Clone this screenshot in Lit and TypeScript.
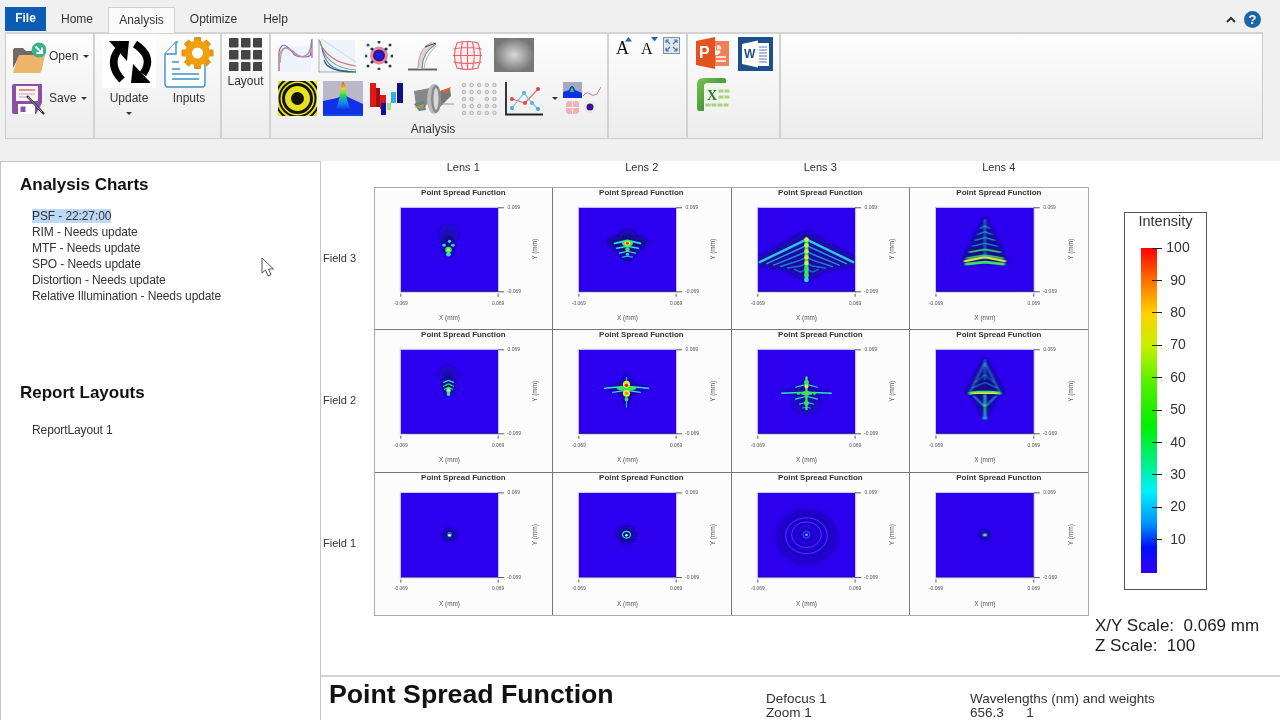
import { LitElement, html, css, svg } from "lit";
import { customElement } from "lit/decorators.js";

const E = (x: number, y: number, rx: number, ry: number, f: string, o = 1) =>
  svg`<ellipse cx=${x} cy=${y} rx=${rx} ry=${ry} fill=${f} opacity=${o}></ellipse>`;
const L = (pts: string, s: string, w = 1, o = 1) =>
  svg`<polyline points=${pts} fill="none" stroke=${s} stroke-width=${w} opacity=${o} stroke-linecap="round" stroke-linejoin="round"></polyline>`;
const G = (pts: string, f: string, o = 1) => svg`<polygon points=${pts} fill=${f} opacity=${o}></polygon>`;
const O = (x: number, y: number, rx: number, ry: number, s: string, w = 1, o = 1) =>
  svg`<ellipse cx=${x} cy=${y} rx=${rx} ry=${ry} fill="none" stroke=${s} stroke-width=${w} opacity=${o}></ellipse>`;

const DK = "#0a0a86", CY = "#35d8ea", GR = "#3ce25a", YE = "#dcec30", RD = "#e02a10", WH = "#e8ffff";

type Psf = { h: unknown[]; c: unknown[] };
const range = (n: number) => Array.from({ length: n }, (_, i) => i);

const PSF: Psf[] = [
  // row 1 (Field 3)
  {
    h: [E(48, 27, 9, 10, "#1c10b0", 0.8), E(48, 37, 6, 9, DK), E(48, 44, 5, 5, DK)],
    c: [E(49, 34, 1.6, 1.6, CY), E(43.5, 38, 1.8, 1.5, CY), E(52.5, 38, 1.8, 1.5, CY), E(48, 42.5, 3.4, 3, GR), E(48, 42.5, 1.8, 1.6, YE), E(48, 47, 2.4, 2.2, CY)],
  },
  {
    h: [E(49, 35, 20, 7, DK), G("32,36 66,36 49,56", DK, 0.9), E(49, 29, 8, 7, DK, 0.7)],
    c: [L("36,36 49,33 62,36", CY, 2), L("38,41 49,39 60,41", CY, 1.6), L("41,46 49,44 57,46", CY, 1.3), L("44,50 49,49 54,50", "#2aa8e0", 1.2), E(49, 36, 5.5, 3.4, GR), E(49, 36, 3, 2.4, YE), E(49, 36, 1.5, 1.3, RD), E(49, 42, 2.2, 2.2, GR), E(49, 47, 1.6, 1.6, CY)],
  },
  {
    h: [G("49,23 0,50 0,59 30,64 49,75 68,64 98,59 98,50", DK, 0.7)],
    c: [
      ...range(6).map((i) =>
        L(`${2 + i * 7},${55 + i * 1.5} ${49 - 6},${35 + i * 6} 49,${32 + i * 6} ${49 + 6},${35 + i * 6} ${96 - i * 7},${55 + i * 1.5}`, i === 0 ? CY : "#28b4e0", i === 0 ? 2.4 : 1.5, 0.9 - i * 0.08)
      ),
      L("49,32 49,70", GR, 4),
      ...range(7).map((i) => E(49, 32 + i * 6, 2.2, 2.2, i < 5 ? YE : GR)),
      E(49, 73, 2.4, 2.4, CY),
    ],
  },
  {
    h: [G("49,8 25,56 73,56", DK, 0.9)],
    c: [
      ...range(6).map((i) => {
        const y = 18 + i * 6, w = (y - 9) * 0.46;
        return L(`${49 - w},${y + 3} 49,${y} ${49 + w},${y + 3}`, i > 3 ? GR : "#28b4e0", i > 3 ? 1.8 : 1.1, 0.85);
      }),
      L("29,54 49,50 69,54", YE, 2.2),
      L("30,57 49,55 68,57", GR, 2.6),
      L("49,12 49,52", "#2cc0e8", 1.1),
    ],
  },
  // row 2 (Field 2)
  {
    h: [E(48, 25, 9, 8, "#1c10b0", 0.8), E(48, 36, 6, 10, DK)],
    c: [L("43,33 48,31 53,33", CY, 1.3), L("43,37 48,34.5 53,37", GR, 1.2), L("44,40 48,38 52,40", CY, 1.1), E(48, 41, 2.4, 2.9, GR), E(48, 41, 1.4, 1.8, YE), E(48, 45, 1.7, 1.9, CY)],
  },
  {
    h: [G("48,23 53,35 72,39 53,43 48,60 43,43 24,39 43,35", DK, 0.95), E(48, 39, 11, 7, DK)],
    c: [L("26,39 48,37 70,39", CY, 1.5), L("34,43 48,41 62,43", CY, 1.3), L("48,28 48,58", "#2aa8e0", 1.3), E(48, 39, 10, 2.6, GR), E(48, 35, 3.6, 3.6, YE), E(48, 36, 1.8, 1.8, RD), E(48, 44, 3.6, 3.6, YE), E(48, 44, 1.6, 1.6, "#e88020"), E(48, 50, 1.8, 2.2, GR)],
  },
  {
    h: [G("49,28 55,38 76,44 56,47 49,66 42,47 22,44 42,38", DK, 0.85), E(49, 53, 13, 12, "#1c10b0", 0.8)],
    c: [L("24,44 49,43 74,44", CY, 1.4), L("38,38 49,35 60,38", CY, 1.1), L("38,50 49,47 60,50", CY, 1.2), L("42,55 49,53 56,55", CY, 1), L("45,59 49,58 53,59", "#2aa8e0", 1), L("49,28 49,60", GR, 2.4), E(49, 33, 2.4, 2.6, GR), E(49, 37, 2, 2.2, YE), E(49, 44, 3.8, 2.4, GR), ...[41, 45, 53, 57].map((x) => E(x, 44, 1.6, 1.6, GR)), E(49, 54, 2.4, 2.4, GR)],
  },
  {
    h: [G("49,7 29,43 38,49 46,68 52,68 60,49 69,43", DK, 0.9)],
    c: [L("49,10 49,30", "#2aa8e0", 1.1), L("49,13 34,43", CY, 1), L("49,13 64,43", CY, 1), L("40,33 49,25 58,33", "#2aa8e0", 0.8), L("36,39 49,33 62,39", "#2aa8e0", 0.8), L("34,44 42,43 56,43 64,44", GR, 3), L("37,44 61,44", YE, 1.4), L("38,47 49,58 60,47", CY, 1.1), L("49,46 49,68", CY, 2), L("49,54 49,62", GR, 1.4), E(49, 69, 2.6, 1.7, "#2aa8e0")],
  },
  // row 3 (Field 1)
  { h: [E(49, 42, 6.5, 6, DK)], c: [E(49, 42, 2.6, 2.6, "#2060d0"), E(49, 42.5, 1.3, 1.3, WH)] },
  { h: [E(48, 42, 9, 8.5, DK)], c: [O(48, 42, 4, 3.4, CY, 1.3), E(48, 42.5, 1.2, 1.2, WH)] },
  {
    h: [E(49, 44, 30, 27, "#2602e0"), O(49, 44, 29, 26, DK, 2.2, 0.7)],
    c: [O(49, 43, 24, 21, "#0e0a92", 1.4, 0.8), O(49, 43, 18, 16, "#0e0a92", 1.2, 0.8), O(49, 42, 12, 11, "#0e0a92", 1.1, 0.8), O(49, 42, 7, 6.5, "#0e0a92", 1, 0.8), O(49, 42, 3.6, 3.4, "#3060d8", 1), O(49, 43, 21, 18, "#5040ff", 1, 0.8), O(49, 42, 15, 13, "#5040ff", 1, 0.8), E(49, 42, 1.3, 1.3, CY)],
  },
  { h: [E(49, 42, 5, 4.6, DK)], c: [E(49, 42, 1.9, 1.9, "#2a90e0"), E(49, 42.5, 1.2, 1.2, "#a0f8ff")] },
];

const chart = (i: number) => {
  const p = PSF[i];
  return html`<svg class="chart" viewBox="0 0 178.5 143" preserveAspectRatio="none">
    <defs>
      <filter id=${"h" + i} x="-30%" y="-30%" width="160%" height="160%"><feGaussianBlur stdDeviation="2"></feGaussianBlur></filter>
      <filter id=${"c" + i} x="-30%" y="-30%" width="160%" height="160%"><feGaussianBlur stdDeviation="0.8"></feGaussianBlur></filter>
      <clipPath id=${"k" + i}><rect width="98" height="85"></rect></clipPath>
    </defs>
    <text class="tt" x="89" y="6.600" text-anchor="middle">Point Spread Function</text>
    <rect x="25" y="19" width="100" height="87" fill="#cfcaf8"></rect>
    <g transform="translate(26 20)" clip-path=${"url(#k" + i + ")"}>
      <rect width="98" height="85" fill="#2c00ee"></rect>
      <rect y="84" width="98" height="1" fill="#10108a"></rect>
      <g filter=${"url(#h" + i + ")"}>${p.h}</g>
      <g filter=${"url(#c" + i + ")"}>${p.c}</g>
    </g>
    <path d="M124 20h6M124 105h6M26 107v3M124 107v3" stroke="#333" stroke-width=".8" fill="none"></path>
    <text class="tk" x="133.500" y="21.500">0.069</text>
    <text class="tk" x="133" y="106.500">-0.069</text>
    <text class="tk" x="26" y="118" text-anchor="middle">-0.069</text>
    <text class="tk" x="124" y="118" text-anchor="middle">0.069</text>
    <text class="ax" x="75" y="133.500" text-anchor="middle">X (mm)</text>
    <text class="ax" transform="translate(163 62) rotate(-90)" text-anchor="middle">Y (mm)</text>
  </svg>`;
};

const folderIcon = html`<svg width="34" height="32" viewBox="0 0 34 32">
  <path d="M1 26V8q0-2 2-2h8l3 3h10v4H8z" fill="#6f6a66"></path>
  <path d="M1 31l5-16q.5-2 2.500-2H33l-3.500 16q-.5 2-2.500 2z" fill="#eeb468"></path>
  <circle cx="27" cy="8" r="7.500" fill="#3ab08c"></circle>
  <path d="M23.500 4.500l6 6M30 5.500v5.500h-5.500" stroke="#fff" stroke-width="1.800" fill="none"></path>
</svg>`;

const saveIcon = html`<svg width="34" height="33" viewBox="0 0 34 33">
  <path d="M0 3q0-2 2-2h28v19l-6 11H2q-2 0-2-2z" fill="#8a4fa6"></path>
  <rect x="4" y="3" width="22" height="15" fill="#fbf4f2"></rect>
  <path d="M7 7h16" stroke="#e05a50" stroke-width="1.300"></path>
  <path d="M7 11h16M7 14h11" stroke="#c8a0c8" stroke-width="1.200"></path>
  <rect x="6" y="21" width="17" height="10" fill="#fff"></rect>
  <rect x="8.500" y="23.500" width="5" height="5.500" fill="#8a4fa6"></rect>
  <path d="M15 13l17 18" stroke="#333" stroke-width="2.400"></path>
  <path d="M16 14l14 15" stroke="#c0c0c0" stroke-width=".8"></path>
</svg>`;

const updateIcon = html`<svg class="white" width="54" height="51" viewBox="0 0 54 51">
  <path d="M20 43Q5 27 17 12" fill="none" stroke="#000" stroke-width="7.500"></path>
  <path d="M7 4H27L25 24z" fill="#000"></path>
  <path d="M33 7Q53 20 41 37" fill="none" stroke="#000" stroke-width="7.500"></path>
  <path d="M29 46H48V45L31 27z" fill="#000"></path>
</svg>`;

const teeth = range(8).map(
  (i) => svg`<rect x="30" y="0" width="7" height="7" rx="1" fill="#e8950c" transform=${`rotate(${i * 45} 33.500 16)`}></rect>`
);
const inputsIcon = html`<svg width="50" height="51" viewBox="0 0 50 51">
  <path d="M14 5H12L1 17V47q0 3 3 3H38q3 0 3-3V26" fill="#fff" stroke="#3c90c8" stroke-width="1.400"></path>
  <path d="M12 5V17H1" fill="#fff" stroke="#3c90c8" stroke-width="1.400"></path>
  <path d="M8 25h7M8 32h8M8 37h27M8 42h27" stroke="#3c90c8" stroke-width="1.600"></path>
  ${teeth}
  <circle cx="33.500" cy="16" r="12.500" fill="#eea010"></circle>
  <circle cx="33.500" cy="16" r="5.500" fill="#fff"></circle>
</svg>`;

const layoutIcon = html`<svg width="33" height="33" viewBox="0 0 33 33">
  ${range(9).map((i) => svg`<rect x=${(i % 3) * 12} y=${Math.floor(i / 3) * 12} width="9.500" height="9.500" rx="1" fill="#444"></rect>`)}
</svg>`;

const ic1 = html`<svg width="35" height="34" viewBox="0 0 35 34">
  <rect x="2" y="8" width="31" height="26" fill="#eef3fb"></rect>
  <path d="M1 33V14Q3 5 8 8T15 15 26 19 32 14L34 1V20" fill="none" stroke="#9a68b8" stroke-width="1.200"></path>
  <path d="M2 25Q3 8 9 10T18 16 27 18 33 5" fill="none" stroke="#78b8a0" stroke-width="1.200"></path>
  <path d="M1 33V18Q4 7 10 11T22 18 33 10" fill="none" stroke="#d88090" stroke-width="1"></path>
</svg>`;
const ic2 = html`<svg width="39" height="35" viewBox="0 0 39 35">
  <rect x="3" y="2" width="34" height="32" fill="#eef3fb"></rect>
  <path d="M1 1V34H38" fill="none" stroke="#777" stroke-width=".6"></path>
  <path d="M3 1L38 24" stroke="#ccd6d6" stroke-width="1"></path>
  <path d="M1 2Q8 24 38 28" fill="none" stroke="#d87878" stroke-width="1.200"></path>
  <path d="M2 3Q7 30 38 32" fill="none" stroke="#68a888" stroke-width="1.200"></path>
  <path d="M4 10Q8 33 30 33" fill="none" stroke="#6868c8" stroke-width="1.200"></path>
  <path d="M6 22Q9 34 38 34" fill="none" stroke="#286860" stroke-width="1.200"></path>
</svg>`;
const ic3 = html`<svg width="28" height="29" viewBox="0 0 28 29">
  <circle cx="14" cy="14.500" r="9" fill="#e88890"></circle>
  <circle cx="14" cy="14.500" r="6" fill="#3a10a0"></circle>
  <circle cx="14" cy="14.500" r="3.500" fill="#2020e0"></circle>
  ${[[3, 4], [14, 1], [25, 4], [1, 15], [27, 15], [3, 25], [14, 28], [25, 25]].map(
    ([x, y], i) => svg`<circle cx=${x} cy=${y} r="1.500" fill=${i % 3 === 0 ? "#1050b0" : "#104060"}></circle>`
  )}
  ${[[7, 8], [21, 8], [7, 21], [21, 21]].map(([x, y]) => svg`<circle cx=${x} cy=${y} r="1.600" fill="#103060"></circle>`)}
</svg>`;
const ic4 = html`<svg width="30" height="31" viewBox="0 0 30 31">
  <path d="M1 29.500H30" stroke="#666" stroke-width="2"></path>
  <path d="M13 29Q13 10 28 4" fill="none" stroke="#d8d8d8" stroke-width="5"></path>
  <path d="M11 29Q11 8 25 2" fill="none" stroke="#e89090" stroke-width="1"></path>
  <path d="M15 29Q15 12 29 4" fill="none" stroke="#509070" stroke-width="1"></path>
  <path d="M17 29Q18 16 29 6" fill="none" stroke="#b0b0b0" stroke-width="1"></path>
  <path d="M18 7L29 3" stroke="#333" stroke-width="1"></path>
</svg>`;
const ic5 = html`<svg width="31" height="29" viewBox="0 0 31 29" fill="none" stroke="#e8606c" stroke-width="1.100">
  <path d="M5 2Q15.500-1 26 2Q31 14.500 26 27Q15.500 30 5 27Q0 14.500 5 2z" fill="#fdeef0"></path>
  <path d="M10.500 1Q7 14.500 10.500 28M15.500 0V29M20.500 1Q24 14.500 20.500 28M1.500 8Q15.500 5 29.500 8M1 14.500H30M1.500 21Q15.500 24 29.500 21"></path>
</svg>`;
const ic6 = html`<svg width="40" height="34" viewBox="0 0 40 34">
  <defs><radialGradient id="g6"><stop offset="0" stop-color="#d8d8d8"></stop><stop offset="1" stop-color="#777"></stop></radialGradient></defs>
  <rect width="40" height="34" fill="url(#g6)"></rect>
</svg>`;
const rings = html`<svg width="39" height="35" viewBox="0 0 39 35">
  <rect width="39" height="35" fill="#e6e220"></rect>
  <g fill="none" stroke="#14140a">
    <circle cx="19.500" cy="17.500" r="22" stroke-width="2"></circle>
    <circle cx="19.500" cy="17.500" r="18" stroke-width="2"></circle>
    <circle cx="19.500" cy="17.500" r="14" stroke-width="3"></circle>
  </g>
  <circle cx="19.500" cy="17.500" r="6.500" fill="#14140a"></circle>
</svg>`;
const surf = html`<svg width="40" height="35" viewBox="0 0 40 35">
  <defs><linearGradient id="gs" x1="0" y1="0" x2="0" y2="1"><stop offset="0" stop-color="#e84020"></stop><stop offset=".25" stop-color="#e8d820"></stop><stop offset=".5" stop-color="#20d860"></stop><stop offset=".8" stop-color="#1080f0"></stop><stop offset="1" stop-color="#0840e0"></stop></linearGradient></defs>
  <rect width="40" height="35" fill="#b8b8c8"></rect>
  <path d="M0 35V20L14 17L18 15Q19 8 20 1Q22 8 23 15L27 17L40 23V35z" fill="#1030e8"></path>
  <path d="M13 28Q16 22 17 12Q18.500 1 20 1Q22 1 23 12Q24 22 28 28z" fill="url(#gs)"></path>
  <rect y="33" width="40" height="2" fill="#0a50e8"></rect>
</svg>`;
const bars = html`<svg width="35" height="34" viewBox="0 0 35 34">
  <rect x="1" y="2" width="6" height="24" fill="#e01818"></rect>
  <rect x="7" y="7" width="4" height="19" fill="#a01010"></rect>
  <rect x="11" y="14" width="6" height="14" fill="#d81818"></rect>
  <rect x="12" y="22" width="5" height="12" fill="#1010a0"></rect>
  <rect x="18" y="22" width="4" height="7" fill="#a0e080"></rect>
  <rect x="22" y="11" width="5" height="11" fill="#30b0e8"></rect>
  <rect x="28" y="2" width="6" height="20" fill="#101080"></rect>
</svg>`;
const lens = html`<svg width="45" height="33" viewBox="0 0 45 33">
  <path d="M4 9L20 6L22 16L14 26L6 24z" fill="#888"></path>
  <path d="M4 22L14 19L16 28L9 29z" fill="#4f8f80"></path>
  <path d="M4 25L14 22L13 27z" fill="#d08850"></path>
  <path d="M27 10L40 6L41 14L30 25z" fill="#777"></path>
  <path d="M30 9L41 5L38 11z" fill="#d8663c"></path>
  <ellipse cx="24" cy="17" rx="7" ry="15" fill="#bbb"></ellipse>
  <ellipse cx="26" cy="17" rx="5" ry="14" fill="#8a8a8a"></ellipse>
  <ellipse cx="26" cy="17" rx="2.500" ry="11" fill="#d8d8d8"></ellipse>
  <path d="M32 22H44" stroke="#999" stroke-width="1"></path>
</svg>`;
const spots = html`<svg width="36" height="33" viewBox="0 0 36 33">
  ${range(25).map((i) => {
    const x = (i % 5) * 7.6 + 3, y = Math.floor(i / 5) * 7 + 3;
    return i === 12 ? svg`` : svg`<circle cx=${x} cy=${y} r="1.800" fill="#ddd" stroke="#a0a0a0" stroke-width=".7"></circle>`;
  })}
</svg>`;
const linec = html`<svg width="38" height="35" viewBox="0 0 38 35">
  <path d="M1 1V33.500H38" fill="none" stroke="#222" stroke-width="1.800"></path>
  <path d="M7 18L20 22L33 8" fill="none" stroke="#e07070" stroke-width="1.200"></path>
  ${[[7, 27], [19, 12], [27, 22]].map(([x, y]) => svg`<circle cx=${x} cy=${y} r="2" fill="#40a8d8"></circle>`)}
  ${[[7, 18], [20, 22], [33, 8]].map(([x, y]) => svg`<circle cx=${x} cy=${y} r="2" fill="#d84848"></circle>`)}
  <path d="M7 27L19 12L27 22L33 28" fill="none" stroke="#70c0e0" stroke-width="1.200"></path>
  <circle cx="33" cy="28" r="2" fill="#40a8d8"></circle>
</svg>`;
const combo = html`<svg width="38" height="33" viewBox="0 0 38 33">
  <rect width="19" height="16" fill="#a8a8c0"></rect>
  <path d="M0 16V10L6 8Q9 0 12 8L19 11V16z" fill="#1030e8"></path>
  <path d="M7 10Q9 1 11 10z" fill="#30d050"></path>
  <path d="M20 14Q24 9 27 12T34 12L38 5" fill="none" stroke="#b080a8" stroke-width="1"></path>
  <rect x="3" y="19" width="13" height="13" rx="3" fill="#f4b0b8"></rect>
  <path d="M3 25.500H16M9.500 19V32" stroke="#fff" stroke-width="1"></path>
  <circle cx="27" cy="25" r="3.500" fill="#3a108c"></circle>
  <circle cx="27" cy="25" r="5.500" fill="none" stroke="#e8c8d8" stroke-width="1" stroke-dasharray="1 2"></circle>
</svg>`;

const fontUp = html`<svg width="20" height="23" viewBox="0 0 20 23">
  <text x="0" y="16.500" class="aa">A</text><path d="M9 4.500L12.500 0L16 4.500z" fill="#1f6aa8"></path>
</svg>`;
const fontDown = html`<svg width="20" height="23" viewBox="0 0 20 23">
  <text x="1" y="16.500" class="ab">A</text><path d="M11 0H18L14.500 4.500z" fill="#1f6aa8"></path>
</svg>`;
const fitIcon = html`<svg width="17" height="17" viewBox="0 0 17 17">
  <rect x=".5" y=".5" width="16" height="16" fill="#dfe6ee" stroke="#7d93b0"></rect>
  <path d="M3 3L7 7M3 3v3M3 3h3M14 3L10 7M14 3v3M14 3h-3M3 14L7 10M3 14v-3M3 14h3M14 14L10 10M14 14v-3M14 14h-3" stroke="#4a78a8" stroke-width="1.200" fill="none"></path>
</svg>`;
const pptIcon = html`<svg width="33" height="32" viewBox="0 0 33 32">
  <rect x="15" y="4" width="18" height="25" fill="#f08058"></rect>
  <path d="M20 9a4.500 4.500 0 1 0 4.500 4.500H20z" fill="#fff"></path>
  <path d="M21 8a4.500 4.500 0 0 1 4.500 4.500H21z" fill="#fde0d4"></path>
  <path d="M20 20h10M20 24h10" stroke="#fff" stroke-width="1.400"></path>
  <path d="M0 4L19 0V32L0 28z" fill="#e2531e"></path>
  <text x="3" y="21" class="pp">P</text>
</svg>`;
const wordIcon = html`<svg width="35" height="34" viewBox="0 0 35 34">
  <rect width="35" height="34" fill="#1d4f8f"></rect>
  <rect x="18" y="6" width="13" height="23" fill="#fff"></rect>
  <path d="M21 10h8M21 13h8M21 16h8M21 19h8M21 22h8M21 25h8" stroke="#5a80b0" stroke-width="1.100"></path>
  <path d="M4 7L20 3.500V30.500L4 27z" fill="#fff"></path>
  <text x="6" y="21" class="ww">W</text>
</svg>`;
const xlsIcon = html`<svg width="34" height="35" viewBox="0 0 34 35">
  <defs><linearGradient id="gx" x1="0" y1="0" x2="1" y2="1"><stop offset="0" stop-color="#7cc450"></stop><stop offset="1" stop-color="#207830"></stop></linearGradient></defs>
  <path d="M1 31V7Q1 1 8 1H28Q30 1 30 3V6H12Q8 6 8 10V34H3Q1 34 1 31z" fill="url(#gx)"></path>
  <rect x="8" y="7" width="26" height="27" rx="2" fill="#f0f6e8"></rect>
  ${[[25, 14], [31, 14], [25, 20], [31, 20], [12, 28], [18, 28], [24, 28], [30, 28]].map(
    ([x, y]) => svg`<rect x=${x - 2.5} y=${y - 1.5} width="5" height="3" fill="#a8d088"></rect>`
  )}
  <text x="11" y="22.500" class="xx">X</text>
</svg>`;

const row1 = [ic1, ic2, ic3, ic4, ic5, ic6];
const row2 = [rings, surf, bars, lens, spots, linec];

@customElement("app-root")
export class AppRoot extends LitElement {
  static styles = css`
    :host { display: block; width: 1280px; height: 720px; overflow: hidden; position: relative; background: #fff; color: #333; font-family: "Liberation Sans", Arial, sans-serif; filter: blur(0.5px); }
    * { box-sizing: border-box; }
    .top { height: 161px; background: #f0f0f0; }
    .tabs { height: 32px; padding: 7px 0 0 5px; display: flex; align-items: flex-start; font-size: 12px; }
    .tab { height: 25px; line-height: 25px; text-align: center; color: #333; }
    .file { width: 41px; background: #0b5cb5; color: #fff; font-weight: bold; height: 24px; line-height: 22px; }
    .home { width: 62px; }
    .analysis { width: 67px; background: #fafafa; border: 1px solid #d0d0d0; border-bottom: none; height: 26px; line-height: 24px; position: relative; z-index: 1; }
    .optimize { width: 77px; }
    .help { width: 47px; }
    .spacer { flex: 1; }
    .tools { display: flex; align-items: center; height: 24px; gap: 8px; margin-right: 19px; }
    .panel { margin: 0 17px 0 5px; height: 107px; border: 1px solid #cccccc; border-top: 2px solid #d4d4d4; background: linear-gradient(#fdfdfd, #ececec); display: flex; font-size: 12px; color: #333; }
    .grp { border-right: 2px solid #d2d2d2; flex: none; height: 100%; }
    .g1 { width: 89px; padding: 7px 0 0 6px; display: flex; flex-direction: column; gap: 9px; }
    .btnrow { display: flex; align-items: center; gap: 3px; height: 33px; }
    .btnrow span { padding-bottom: 3px; }
    .btnrow .caret { margin: 0 0 2px 2px; }
    .caret { display: inline-block; width: 0; height: 0; border: 3px solid transparent; border-top: 3px solid #333; border-bottom: none; }
    .g2 { width: 127px; padding: 3px 0 0 7px; display: flex; gap: 8px; }
    .col { display: flex; flex-direction: column; align-items: center; }
    .col span { margin-top: 3px; line-height: 15px; }
    .col .caret { margin: 6px 0 0; }
    .white { background: #fff; }
    .g3 { width: 49px; padding-top: 4px; }
    .g3 span { margin-top: 3px; }
    .g4 { width: 338px; padding: 3px 0 0 7px; }
    .r1 { display: grid; grid-template-columns: 40px 47px 42px 45px 42px 40px; height: 36px; align-items: center; }
    .r2 { display: grid; grid-template-columns: 45px 46px 41px 51px 44px 45px 13px 40px; height: 36px; margin-top: 7px; align-items: center; }
    .r2 .caret { margin: 0 0 0 2px; }
    .glabel { width: 310px; text-align: center; margin-top: 6px; line-height: 14px; }
    .g5 { width: 79px; padding: 3px 0 0 7px; display: flex; gap: 3.500px; align-items: flex-start; }
    .g6 { width: 93px; padding: 3px 0 0 8px; display: grid; grid-template-columns: 42px 35px; grid-template-rows: 40px 35px; }
    .g7 { flex: 1; }
    svg { display: block; flex: none; }
    .aa { font: 18px "Liberation Serif", serif; fill: #111; }
    .ab { font: 16px "Liberation Serif", serif; fill: #111; }
    .pp { font: bold 16px "Liberation Sans", sans-serif; fill: #fff; }
    .ww { font: bold 12px "Liberation Sans", sans-serif; fill: #1d4f8f; }
    .xx { font: bold 14px "Liberation Serif", serif; fill: #2d7a34; }
    .main { display: flex; height: 559px; }
    .left { width: 321px; flex: none; border: 1px solid #c4c4c4; border-bottom: none; padding: 13px 0 0 19px; }
    h2 { margin: 0; font-size: 17px; line-height: 20px; color: #111; font-weight: bold; }
    ul { list-style: none; margin: 13px 0 0 12px; padding: 0; font-size: 12px; letter-spacing: -0.100px; line-height: 16px; color: #333; }
    .sel { background: #bdd9f7; }
    .reports { margin-top: 79px; }
    .reports ul { margin-top: 19px; }
    .right { flex: 1; display: flex; flex-direction: column; }
    .upper { height: 514px; display: grid; grid-template-columns: 53px 715px 1fr; grid-template-rows: 26px 429px; font-size: 11px; color: #333; }
    .heads { grid-column: 2; display: grid; grid-template-columns: repeat(4, 1fr); line-height: 13px; text-align: center; padding-right: 1px; }
    .fields { grid-column: 1; grid-row: 2; display: grid; grid-template-rows: repeat(3, 1fr); align-items: center; padding: 0 0 2px 2px; }
    .grid { grid-column: 2; grid-row: 2; display: grid; grid-template-columns: repeat(4, 1fr); grid-template-rows: repeat(3, 1fr); border: 1px solid #aaa; background: #fcfcfc; }
    .cell { border-right: 1px solid #777; border-bottom: 1px solid #777; min-width: 0; min-height: 0; }
    .cell:nth-child(4n) { border-right: none; }
    .cell:nth-child(n + 9) { border-bottom: none; }
    .chart { width: 100%; height: 100%; }
    .tt { font: bold 8px "Liberation Sans", sans-serif; fill: #333; }
    .tk { font: 5px "Liberation Sans", sans-serif; fill: #555; }
    .ax { font: 6.500px "Liberation Sans", sans-serif; fill: #555; }
    .side { grid-column: 3; grid-row: 1 / span 2; padding: 51px 0 0 6px; }
    .legend { width: 83px; height: 378px; margin-left: 29px; border: 1px solid #555; background: #fff; }
    .ltitle { font-size: 14.500px; line-height: 17px; text-align: center; }
    .lbody { display: flex; margin: 18px 0 0 16px; height: 325px; }
    .bar { width: 16px; height: 325px; flex: none; background: linear-gradient(#ff0000 0%, #ff7000 10%, #ffd000 20%, #c8f000 30%, #50f000 42%, #00f000 55%, #00f0a0 68%, #00f0ff 75%, #0090ff 85%, #0010ff 92%, #3200ff 100%); }
    .ticks { margin: -16px 0 0 -5px; }
    .tick { height: 32.400px; display: flex; align-items: center; }
    .mark { width: 10px; height: 1px; background: #222; }
    .num { width: 24px; margin: -2px 0 0 4px; text-align: center; font-size: 14px; color: #333; }
    .scale { margin-top: 26px; font-size: 17px; line-height: 20px; color: #222; white-space: nowrap; }
    .bottom { flex: 1; border-top: 2px solid #d4d4d4; display: grid; grid-template-columns: 437px 204px 1fr; padding-left: 8px; font-size: 13.500px; line-height: 14px; color: #333; white-space: pre; }
    .ptitle { font-size: 26.700px; font-weight: bold; line-height: 30px; color: #111; margin-top: 2px; }
    .info { padding-top: 15px; }
    .cursor { position: absolute; left: 261px; top: 257px; }
  `;

  render() {
    return html`
      <div class="top">
        <div class="tabs">
          <div class="tab file">File</div>
          <div class="tab home">Home</div>
          <div class="tab analysis">Analysis</div>
          <div class="tab optimize">Optimize</div>
          <div class="tab help">Help</div>
          <div class="spacer"></div>
          <div class="tools">
            <svg width="10" height="7" viewBox="0 0 10 7"><path d="M1 6L5 2L9 6" fill="none" stroke="#333" stroke-width="2"></path></svg>
            <svg width="17" height="17" viewBox="0 0 17 17">
              <circle cx="8.500" cy="8.500" r="8.500" fill="#1b66a8"></circle>
              <text x="8.500" y="13" text-anchor="middle" font-family="Liberation Sans" font-weight="bold" font-size="13" fill="#fff">?</text>
            </svg>
          </div>
        </div>
        <div class="panel">
          <div class="grp g1">
            <div class="btnrow">${folderIcon}<span>Open</span><i class="caret"></i></div>
            <div class="btnrow">${saveIcon}<span>Save</span><i class="caret"></i></div>
          </div>
          <div class="grp g2">
            <div class="col">${updateIcon}<span>Update</span><i class="caret"></i></div>
            <div class="col">${inputsIcon}<span>Inputs</span></div>
          </div>
          <div class="grp g3 col">${layoutIcon}<span>Layout</span></div>
          <div class="grp g4">
            <div class="r1">${row1}</div>
            <div class="r2">${row2}<i class="caret"></i>${combo}</div>
            <div class="glabel">Analysis</div>
          </div>
          <div class="grp g5">${fontUp}${fontDown}${fitIcon}</div>
          <div class="grp g6">${pptIcon}${wordIcon}${xlsIcon}</div>
          <div class="g7"></div>
        </div>
      </div>
      <div class="main">
        <div class="left">
          <h2>Analysis Charts</h2>
          <ul>
            <li><span class="sel">PSF - 22:27:00</span></li>
            <li>RIM - Needs update</li>
            <li>MTF - Needs update</li>
            <li>SPO - Needs update</li>
            <li>Distortion - Needs update</li>
            <li>Relative Illumination - Needs update</li>
          </ul>
          <div class="reports">
            <h2>Report Layouts</h2>
            <ul><li>ReportLayout 1</li></ul>
          </div>
        </div>
        <div class="right">
          <div class="upper">
            <div class="heads">
              ${[1, 2, 3, 4].map((n) => html`<div>Lens ${n}</div>`)}
            </div>
            <div class="fields">
              ${[3, 2, 1].map((n) => html`<div>Field ${n}</div>`)}
            </div>
            <div class="grid">
              ${range(12).map((i) => html`<div class="cell">${chart(i)}</div>`)}
            </div>
            <div class="side">
              <div class="legend">
                <div class="ltitle">Intensity</div>
                <div class="lbody">
                  <div class="bar"></div>
                  <div class="ticks">
                    ${[100, 90, 80, 70, 60, 50, 40, 30, 20, 10].map(
                      (n) => html`<div class="tick"><i class="mark"></i><span class="num">${n}</span></div>`
                    )}
                  </div>
                </div>
              </div>
              <div class="scale">X/Y Scale:&nbsp; 0.069 mm<br />Z Scale:&nbsp; 100</div>
            </div>
          </div>
          <div class="bottom">
            <div class="ptitle">Point Spread Function</div>
            <div class="info">Defocus 1<br />Zoom 1</div>
            <div class="info">Wavelengths (nm) and weights<br />656.3      1</div>
          </div>
        </div>
      </div>
      <svg class="cursor" width="14" height="20" viewBox="0 0 14 20">
        <path d="M1 1V16L4.500 13L7 19L10 17.500L7.500 12H12.500z" fill="#fff" stroke="#555" stroke-width="1"></path>
      </svg>
    `;
  }
}
